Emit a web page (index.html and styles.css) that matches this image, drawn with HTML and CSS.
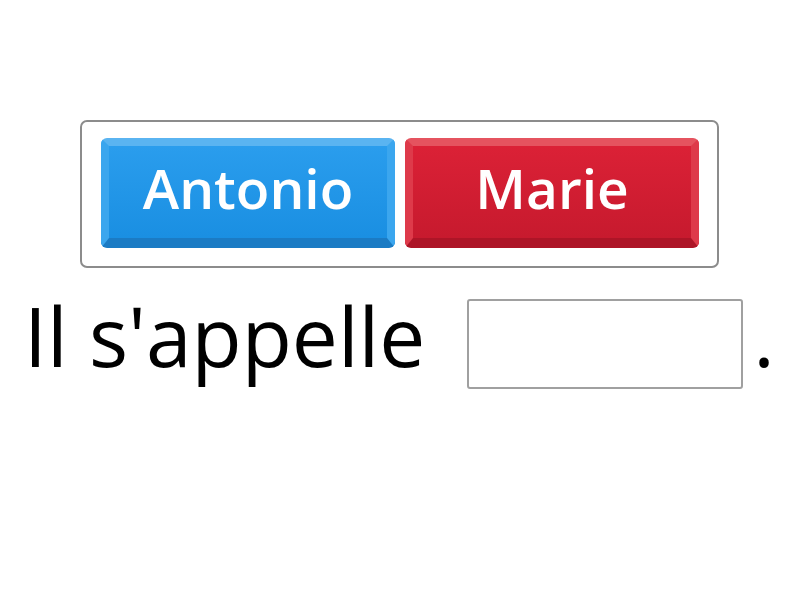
FILE: index.html
```html
<!DOCTYPE html>
<html lang="fr">
  <head>
    <meta charset="utf-8">
    <title>Il s'appelle</title>
    <link rel="stylesheet" href="styles.css">
  </head>
  <body>
    <div class="quiz">
      <div class="choices">
        <button class="choice choiceBlue">Antonio</button>
        <button class="choice choiceRed">Marie</button>
      </div>
      <div class="sentence">
        <span class="words">Il s'appelle</span>
        <span class="blank"></span>
        <span class="stop">.</span>
      </div>
    </div>
  </body>
</html>
```

FILE: styles.css
```css
body {
  margin: 0;
  background: #fff;
  font-family: "Open Sans", "Noto Sans", sans-serif;
}

.quiz {
  width: 800px;
  height: 600px;
  padding-top: 120px;
  box-sizing: border-box;
}

.choices {
  display: flex;
  gap: 10px;
  width: 639px;
  height: 148px;
  margin-left: 80px;
  padding: 16px 18px 20px 19px;
  box-sizing: border-box;
  border: 2px solid #8c8c8c;
  border-radius: 7px;
}

.choice {
  flex: 1;
  height: 110px;
  border-radius: 6px;
  border-style: solid;
  border-width: 8px 8px 10px 8px;
  color: #fff;
  font-family: inherit;
  font-size: 55px;
  font-weight: 600;
  padding: 0 0 10px 0;
  cursor: pointer;
}

.choiceBlue {
  background: linear-gradient(#2a9ded, #1a8fe2);
  border-color: #5ab4f1 #3ba6ee #1b7bc4 #3ba6ee;
}

.choiceRed {
  background: linear-gradient(#db2136, #c71a2e);
  border-color: #e5535f #de3a4a #ad1527 #de3a4a;
}

.sentence {
  display: flex;
  align-items: flex-start;
  margin-top: 31px;
  padding-left: 24px;
  font-size: 82px;
  color: #000;
}

.words {
  line-height: 1;
  margin-top: -5px;
}

.blank {
  width: 276px;
  height: 90px;
  margin-left: 42px;
  box-sizing: border-box;
  border: 2px solid #a0a0a0;
  border-radius: 3px;
}

.stop {
  margin-left: 10px;
  margin-top: -5px;
  line-height: 1;
}
```
